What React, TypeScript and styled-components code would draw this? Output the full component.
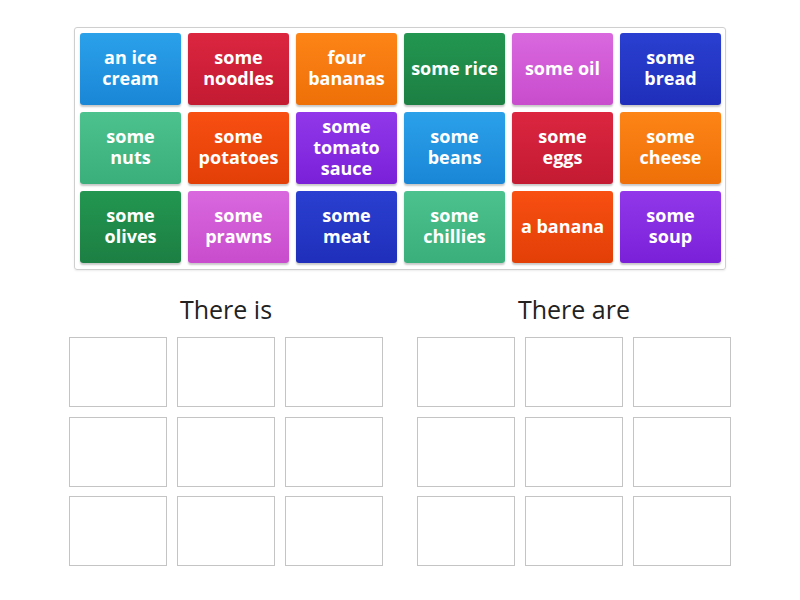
import React from "react";
import styled, { createGlobalStyle } from "styled-components";

const Global = createGlobalStyle`
  html, body { margin: 0; padding: 0; background: #fff; }
  body { font-family: "Open Sans", "Liberation Sans", sans-serif; }
`;

const Page = styled.div`
  width: 800px;
  height: 600px;
  display: flex;
  flex-direction: column;
  align-items: center;
`;

const Bank = styled.div`
  margin-top: 27px;
  box-sizing: border-box;
  width: 652px;
  border: 1px solid #cfcfcf;
  border-radius: 3px;
  padding: 5px 5px 6px 5px;
  display: grid;
  grid-template-columns: repeat(6, 101px);
  grid-auto-rows: 72px;
  column-gap: 7px;
  row-gap: 7px;
  box-shadow: 0 1px 2px rgba(0,0,0,0.08);
`;

const palette: Record<string, [string, string]> = {
  blue: ["#2ba1ea", "#1a86d6"],
  red: ["#dc2640", "#c31a32"],
  orange: ["#fd8417", "#ee7008"],
  green: ["#239651", "#1c7f43"],
  pink: ["#d968de", "#c84ccd"],
  navy: ["#2a3fd0", "#1f2fbb"],
  mint: ["#4cc28f", "#3aae7b"],
  vermilion: ["#f84f12", "#e23f07"],
  purple: ["#9238ea", "#7a20d8"],
};

const Tile = styled.div<{ $c: string }>`
  background: linear-gradient(
    to bottom,
    ${(p) => palette[p.$c][0]},
    ${(p) => palette[p.$c][1]}
  );
  border-radius: 3px;
  box-shadow: 0 2px 2px rgba(0,0,0,0.22);
  color: #fff;
  font-weight: 700;
  font-size: 18px;
  line-height: 21px;
  display: flex;
  align-items: center;
  justify-content: center;
  text-align: center;
  padding: 0 6px 2px;
  box-sizing: border-box;
`;

const Columns = styled.div`
  margin-top: 22px;
  display: flex;
  gap: 34px;
`;

const Group = styled.div`
  display: flex;
  flex-direction: column;
  align-items: center;
  width: 314px;
`;

const Title = styled.div`
  font-size: 25px;
  color: #222;
  line-height: 34px;
  height: 45px;
`;

const Slots = styled.div`
  display: grid;
  grid-template-columns: repeat(3, 98px);
  grid-auto-rows: 70px;
  column-gap: 10px;
  row-gap: 9.5px;
`;

const Slot = styled.div`
  border: 1px solid #c4c4c4;
  box-sizing: border-box;
  background: #fff;
`;

const tiles: [string, string][] = [
  ["an ice cream", "blue"],
  ["some noodles", "red"],
  ["four bananas", "orange"],
  ["some rice", "green"],
  ["some oil", "pink"],
  ["some bread", "navy"],
  ["some nuts", "mint"],
  ["some potatoes", "vermilion"],
  ["some tomato sauce", "purple"],
  ["some beans", "blue"],
  ["some eggs", "red"],
  ["some cheese", "orange"],
  ["some olives", "green"],
  ["some prawns", "pink"],
  ["some meat", "navy"],
  ["some chillies", "mint"],
  ["a banana", "vermilion"],
  ["some soup", "purple"],
];

const labels = ["There is", "There are"];

export default function App() {
  return (
    <Page>
      <Global />
      <Bank>
        {tiles.map(([t, c]) => (
          <Tile key={t} $c={c}>
            {t}
          </Tile>
        ))}
      </Bank>
      <Columns>
        {labels.map((l) => (
          <Group key={l}>
            <Title>{l}</Title>
            <Slots>
              {Array.from({ length: 9 }).map((_, i) => (
                <Slot key={i} />
              ))}
            </Slots>
          </Group>
        ))}
      </Columns>
    </Page>
  );
}
